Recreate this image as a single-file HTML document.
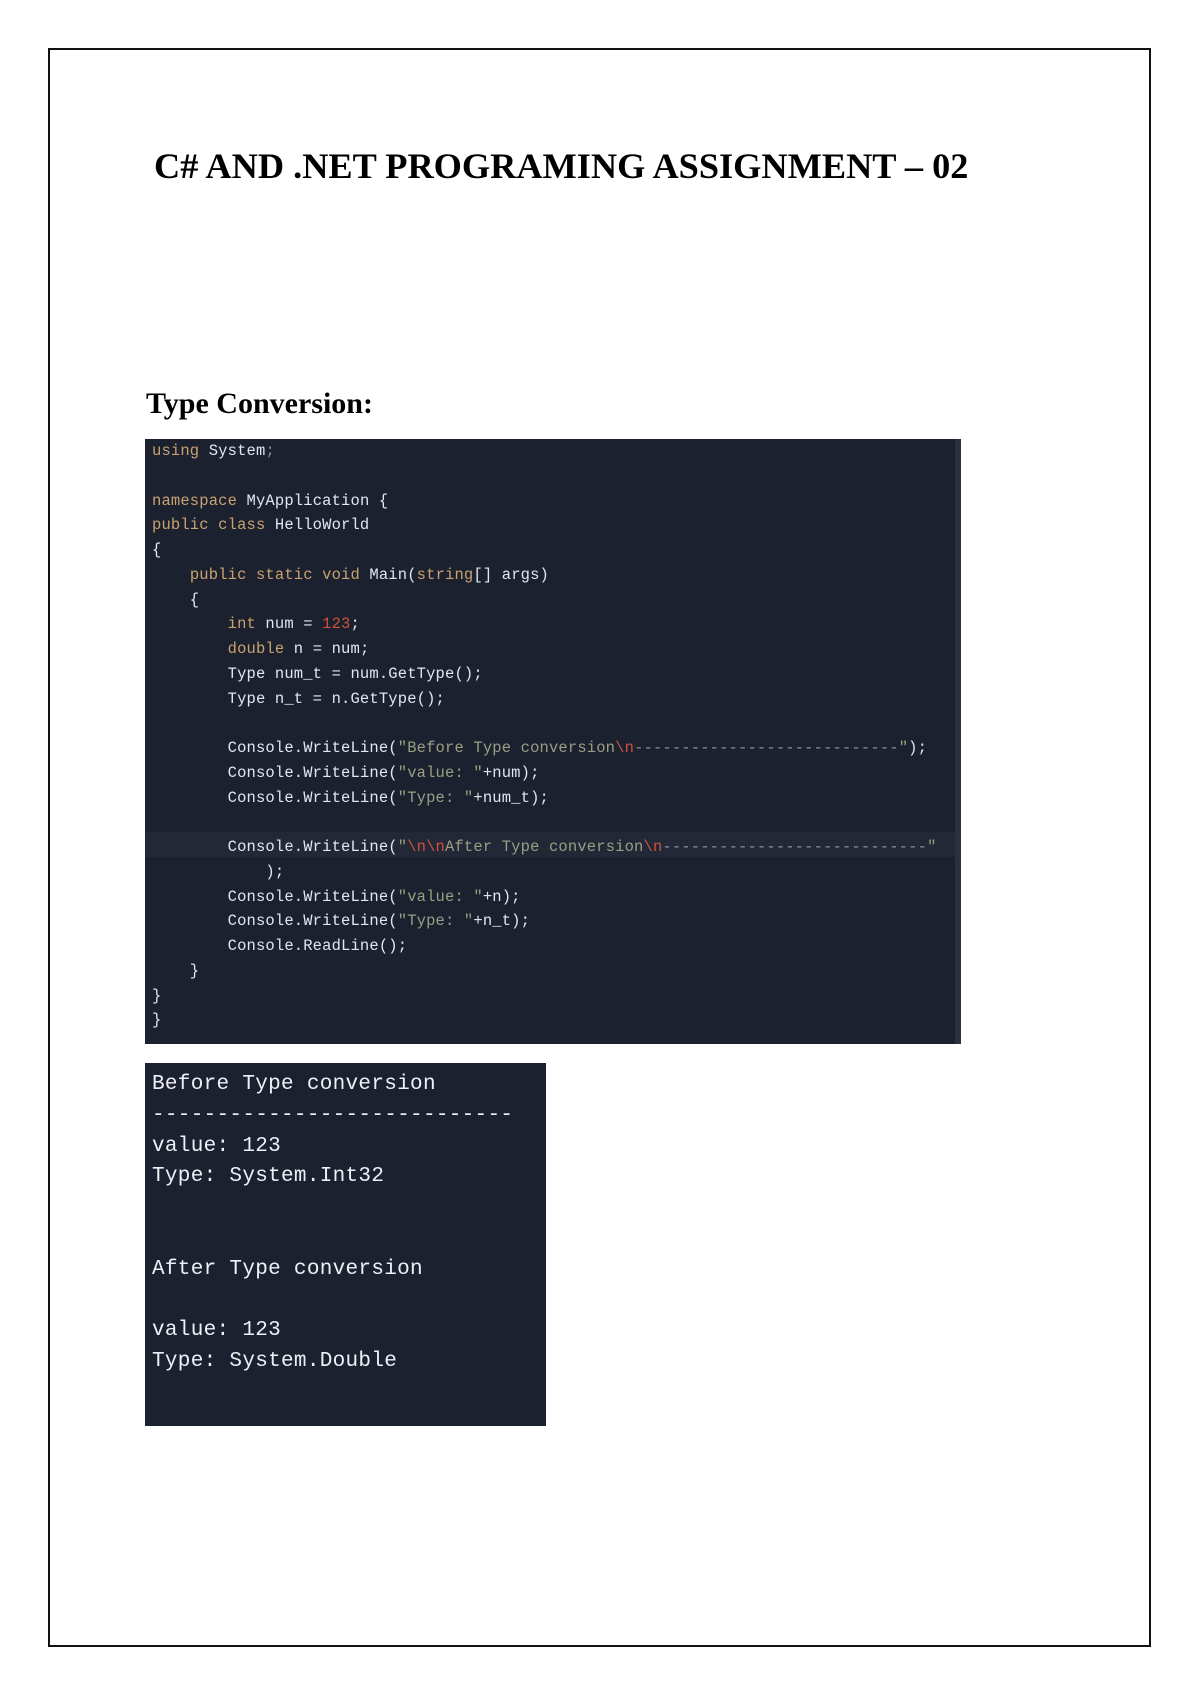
<!DOCTYPE html>
<html><head><meta charset="utf-8"><style>
body{margin:0;width:1200px;height:1696px;background:#fff;position:relative;overflow:hidden}
.frame{position:absolute;left:48px;top:48px;width:1103px;height:1599px;border:2px solid #111;box-sizing:border-box}
.t{position:absolute;font-family:"Liberation Serif",serif;font-weight:bold;color:#000;white-space:nowrap}
.code{position:absolute;left:145px;top:439px;width:816px;height:605px;background:#1c2130;border-right:6px solid #2a303e;box-sizing:border-box}
.code pre{margin:0;position:absolute;left:7px;top:0;font-family:"Liberation Mono",monospace;font-size:15.5px;letter-spacing:.15px;line-height:24.75px;color:#e4e6ee}
.k{color:#c8a26e}.s{color:#9a9e82}.r{color:#d0503c}.d{color:#8a8f9c}
.hl{position:absolute;left:0;top:393px;width:810px;height:25px;background:#232837}
.out{position:absolute;left:145px;top:1063px;width:401px;height:363px;background:#1c2130}
.out pre{margin:0;position:absolute;left:7px;top:7px;font-family:"Liberation Mono",monospace;font-size:21px;letter-spacing:.3px;line-height:30.8px;color:#eef0f4}
</style></head><body>
<div class="frame"></div>
<div class="t" style="left:154px;top:145px;font-size:36.3px">C# AND .NET PROGRAMING ASSIGNMENT – 02</div>
<div class="t" style="left:146px;top:387px;font-size:30px">Type Conversion:</div>
<div class="code"><div class="hl"></div><pre><span class="k">using</span> System<span class="d">;</span>

<span class="k">namespace</span> MyApplication {
<span class="k">public class</span> HelloWorld
{
    <span class="k">public static void</span> Main(<span class="k">string</span>[] args)
    {
        <span class="k">int</span> num = <span class="r">123</span>;
        <span class="k">double</span> n = num;
        Type num_t = num.GetType();
        Type n_t = n.GetType();

        Console.WriteLine(<span class="s">"Before Type conversion</span><span class="r">\n</span><span class="d">----------------------------</span><span class="s">"</span>);
        Console.WriteLine(<span class="s">"value: "</span>+num);
        Console.WriteLine(<span class="s">"Type: "</span>+num_t);

        Console.WriteLine(<span class="s">"</span><span class="r">\n\n</span><span class="s">After Type conversion</span><span class="r">\n</span><span class="d">----------------------------</span><span class="s">"</span>
            );
        Console.WriteLine(<span class="s">"value: "</span>+n);
        Console.WriteLine(<span class="s">"Type: "</span>+n_t);
        Console.ReadLine();
    }
}
}</pre></div>
<div class="out"><pre>Before Type conversion
----------------------------
value: 123
Type: System.Int32


After Type conversion

value: 123
Type: System.Double</pre></div>
</body></html>
